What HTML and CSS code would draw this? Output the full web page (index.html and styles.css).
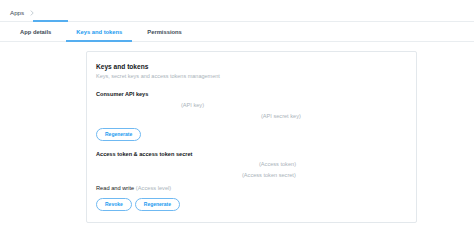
FILE: index.html
```html
<!DOCTYPE html>
<html>
<head>
<meta charset="utf-8">
<link rel="stylesheet" href="styles.css">
</head>
<body>
<header class="crumbs">
  <span class="crumb">Apps</span>
  <svg class="chev" width="4" height="6" viewBox="0 0 4 6"><path d="M0.8 0.6 L3.2 3 L0.8 5.4" fill="none" stroke="#aab8c2" stroke-width="0.7"/></svg>
  <span class="crumb-current"></span>
</header>
<nav class="tabs">
  <span class="tab">App details</span>
  <span class="tab active">Keys and tokens</span>
  <span class="tab">Permissions</span>
</nav>
<main class="content">
  <section class="card">
    <h2 class="title">Keys and tokens</h2>
    <p class="subtitle">Keys, secret keys and access tokens management</p>
    <h3 class="section">Consumer API keys</h3>
    <div class="value v-api">(API key)</div>
    <div class="value v-secret">(API secret key)</div>
    <div class="actions first">
      <button class="btn">Regenerate</button>
    </div>
    <h3 class="section second">Access token &amp; access token secret</h3>
    <div class="value v-token">(Access token)</div>
    <div class="value v-tsecret">(Access token secret)</div>
    <p class="level">Read and write <span class="muted">(Access level)</span></p>
    <div class="actions">
      <button class="btn">Revoke</button>
      <button class="btn">Regenerate</button>
    </div>
  </section>
</main>
</body>
</html>
```
FILE: styles.css
```css
* { box-sizing: border-box; }
body {
  margin: 0;
  background: #fff;
  font-family: "Liberation Sans", Arial, sans-serif;
  color: #14171a;
  width: 474px;
  height: 229px;
  overflow: hidden;
}
.crumbs {
  height: 22px;
  border-bottom: 1px solid #e9edf0;
  display: flex;
  align-items: flex-start;
  padding-left: 10px;
}
.crumb {
  font-size: 6.2px;
  color: #3d4a55;
  margin-top: 9px;
  line-height: 8px;
}
.chev { margin-top: 10px; margin-left: 6px; }
.crumb-current {
  width: 35px;
  height: 22px;
  border-bottom: 2px solid #55aef0;
  margin-bottom: -1px;
  margin-left: -1px;
}
.tabs {
  height: 20px;
  border-bottom: 1px solid #e9edf0;
  display: flex;
  gap: 5px;
  padding-left: 10px;
}
.tab {
  font-size: 5.8px;
  font-weight: bold;
  color: #3d4a55;
  padding: 0 10px;
  line-height: 20px;
  height: 20px;
  margin-bottom: -1px;
  border-bottom: 2px solid transparent;
}
.tab.active { color: #1d9bf0; border-bottom-color: #55aef0; }
.content { padding: 9px 0 0 86px; }
.card {
  width: 331px;
  height: 172px;
  border: 1px solid #e3e8ec;
  border-radius: 2px;
  padding: 10px 9px 0;
}
.title {
  margin: 0;
  font-size: 6.6px;
  line-height: 9px;
  font-weight: bold;
}
.subtitle {
  margin: 2px 0 0;
  font-size: 5.5px;
  line-height: 7px;
  color: #aab3ba;
}
.section {
  margin: 10px 0 0;
  font-size: 5.6px;
  line-height: 8px;
  font-weight: bold;
}
.section.second { margin-top: 9px; }
.value {
  font-size: 5.6px;
  line-height: 7px;
  color: #aab3ba;
  margin-top: 3px;
}
.v-api { padding-left: 85px; margin-top: 4px; }
.v-secret { padding-left: 165px; margin-top: 4px; }
.v-token { padding-left: 163px; margin-top: 3px; }
.v-tsecret { padding-left: 146px; margin-top: 4px; }
.actions { display: flex; gap: 3px; margin-top: 6px; }
.actions.first { margin-top: 8px; }
.btn {
  font-family: inherit;
  font-size: 5px;
  font-weight: bold;
  color: #1d9bf0;
  background: #fff;
  border: 1px solid #6fb9f2;
  border-radius: 8px;
  height: 13px;
  padding: 0 8px;
  line-height: 11px;
}
.level {
  margin: 5px 0 0;
  font-size: 5.7px;
  line-height: 8px;
}
.muted { color: #aab3ba; }
```
